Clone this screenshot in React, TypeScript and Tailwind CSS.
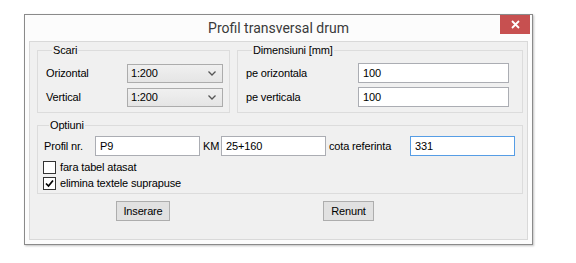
import React from "react";

const ff = { fontFamily: '"Liberation Sans", Arial, sans-serif' };

function Combo({ value }: { value: string }) {
  return (
    <div className="w-[96px] h-[19px] border border-[#acacac] bg-gradient-to-b from-[#f0f0f0] to-[#e5e5e5] flex items-center pl-[3px] pr-[6px]">
      <span className="flex-1 leading-none">{value}</span>
      <svg width="8" height="5" viewBox="0 0 8 5">
        <polyline points="0.5,0.5 4,4 7.5,0.5" fill="none" stroke="#555" strokeWidth="1.3" />
      </svg>
    </div>
  );
}

function TextBox({ value, w, focused }: { value: string; w: string; focused?: boolean }) {
  return (
    <div
      className={
        "h-[20px] bg-white border flex items-center pl-[4px] leading-none " +
        w +
        (focused ? " border-[#569de5]" : " border-[#abadb3]")
      }
    >
      {value}
    </div>
  );
}

function Check({ checked, label }: { checked?: boolean; label: string }) {
  return (
    <div className="flex items-center h-[13px]">
      <div className="w-[13px] h-[13px] border border-[#333333] bg-white flex items-center justify-center">
        {checked && (
          <svg width="9" height="9" viewBox="0 0 9 9">
            <path d="M1 4.5 L3.5 7 L8 1.5" fill="none" stroke="#000" strokeWidth="1.7" />
          </svg>
        )}
      </div>
      <span className="ml-[4px] leading-none">{label}</span>
    </div>
  );
}

function Button({ label, w, ml }: { label: string; w: string; ml: string }) {
  return (
    <div className={"h-[20px] border border-[#adadad] bg-[#e1e1e1] flex items-center justify-center leading-none " + w + " " + ml}>
      {label}
    </div>
  );
}

export default function App() {
  return (
    <div className="min-h-screen bg-white pt-[14px] pl-[24px] text-[11px] tracking-[-0.15px] text-black" style={ff}>
      <div className="relative w-[509px] h-[231px] border border-[#8a8a8a] bg-[#fcfcfc] flex flex-col shadow-[1px_1px_2px_rgba(0,0,0,0.25)]">
        <div className="h-[26px] flex items-center justify-center text-[14px] tracking-normal text-[#3a3a3a] pt-[1px]" style={{ fontFamily: 'Roboto, "Noto Sans", sans-serif' }}>
          Profil transversal drum
        </div>
        <div className="absolute top-0 right-[2px] w-[30px] h-[19px] bg-[#c75050] flex items-center justify-center">
          <svg width="9" height="9" viewBox="0 0 9 9">
            <path d="M1 1 L8 8 M8 1 L1 8" stroke="#fff" strokeWidth="1.8" />
          </svg>
        </div>
        <div className="mx-[4px] mb-[4px] flex-1 border border-[#d9d9d9] bg-[#f0f0f0] pt-[2px] pl-[7px]">
          <div className="flex gap-[7px]">
            <fieldset className="w-[193px] h-[69px] border border-[#dcdcdc] pl-[8px]">
              <legend className="ml-[6px] px-[1px] h-[13px] leading-[13px]">Scari</legend>
              <div className="flex items-center mt-[7px]">
                <span className="w-[81px]">Orizontal</span>
                <Combo value="1:200" />
              </div>
              <div className="flex items-center mt-[5px]">
                <span className="w-[81px]">Vertical</span>
                <Combo value="1:200" />
              </div>
            </fieldset>
            <fieldset className="w-[286px] h-[69px] border border-[#dcdcdc] pl-[8px]">
              <legend className="ml-[6px] px-[1px] h-[13px] leading-[13px]">Dimensiuni [mm]</legend>
              <div className="flex items-center mt-[6px]">
                <span className="w-[112px]">pe orizontala</span>
                <TextBox value="100" w="w-[151px]" />
              </div>
              <div className="flex items-center mt-[4px]">
                <span className="w-[112px]">pe verticala</span>
                <TextBox value="100" w="w-[151px]" />
              </div>
            </fieldset>
          </div>
          <fieldset className="mt-[6px] w-[486px] h-[75px] border border-[#dcdcdc] pl-[5px]">
            <legend className="ml-[6px] px-[1px] h-[13px] leading-[13px]">Optiuni</legend>
            <div className="flex items-center mt-[4px] pl-[1px]">
              <span className="w-[51px]">Profil nr.</span>
              <TextBox value="P9" w="w-[105px]" />
              <span className="ml-[3px] w-[18px]">KM</span>
              <TextBox value="25+160" w="w-[105px]" />
              <span className="ml-[3px] w-[81px]">cota referinta</span>
              <TextBox value="331" w="w-[105px]" focused />
            </div>
            <div className="mt-[5px]">
              <Check label="fara tabel atasat" />
            </div>
            <div className="mt-[3px]">
              <Check checked label="elimina textele suprapuse" />
            </div>
          </fieldset>
          <div className="flex mt-[7px]">
            <Button label="Inserare" w="w-[54px]" ml="ml-[79px]" />
            <Button label="Renunt" w="w-[51px]" ml="ml-[153px]" />
          </div>
        </div>
      </div>
    </div>
  );
}
